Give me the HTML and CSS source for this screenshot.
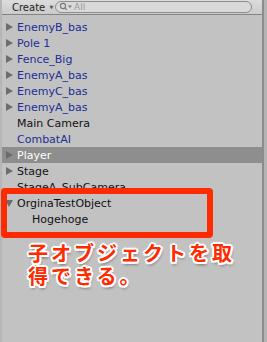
FILE: index.html
```html
<!DOCTYPE html>
<html lang="ja">
<head>
  <meta charset="UTF-8" />
  <meta name="viewport" content="width=device-width, initial-scale=1.0"/>
  <title>Hierarchy</title>
  <link rel="stylesheet" href="styles.css">
</head>
<body>
  <div class="panel">
    <!-- toolbar -->
    <div class="toolbar">
      <span class="create">Create <span class="caret">&#9660;</span></span>
      <div class="search">
        <svg class="search-icon" width="14" height="9" viewBox="0 0 14 9">
          <circle cx="4" cy="4" r="2.6" fill="none" stroke="#7a7a7a" stroke-width="1.1"/>
          <line x1="5.8" y1="5.8" x2="7.8" y2="7.8" stroke="#7a7a7a" stroke-width="1.2"/>
          <path d="M9 3.5 L13 3.5 L11 6 Z" fill="#7a7a7a"/>
        </svg>
        <span class="placeholder">All</span>
      </div>
    </div>

    <!-- hierarchy -->
    <ul class="tree">
      <li class="row prefab"><span class="arrow"></span>EnemyB_bas</li>
      <li class="row prefab"><span class="arrow"></span>Pole 1</li>
      <li class="row prefab"><span class="arrow"></span>Fence_Big</li>
      <li class="row prefab"><span class="arrow"></span>EnemyA_bas</li>
      <li class="row prefab"><span class="arrow"></span>EnemyC_bas</li>
      <li class="row prefab"><span class="arrow"></span>EnemyA_bas</li>
      <li class="row"><span class="no-arrow"></span>Main Camera</li>
      <li class="row prefab"><span class="no-arrow"></span>CombatAI</li>
      <li class="row selected"><span class="arrow"></span>Player</li>
      <li class="row"><span class="arrow"></span>Stage</li>
      <li class="row"><span class="no-arrow"></span>StageA_SubCamera</li>
      <li class="row"><span class="arrow open"></span>OrginaTestObject</li>
      <li class="row child"><span class="no-arrow"></span>Hogehoge</li>
    </ul>

    <!-- annotation -->
    <div class="highlight-box"></div>
    <p class="note">子オブジェクトを取<br>得できる。</p>
  </div>
</body>
</html>
```

FILE: styles.css
```css
* {
  margin: 0;
  padding: 0;
  box-sizing: border-box;
}

body {
  width: 267px;
  height: 342px;
  overflow: hidden;
  background-color: #b4b4b4;
  font-family: 'DejaVu Sans', 'Liberation Sans', sans-serif;
}

.panel {
  position: relative;
  width: 264px;
  height: 342px;
  background-color: #c2c2c2;
  border-left: 2px solid #b6b6b6;
  border-right: 2px solid #8c8c8c;
  display: flex;
  flex-direction: column;
}

/* Toolbar */
.toolbar {
  height: 15px;
  background: linear-gradient(#dcdcdc, #cbcbcb);
  border-bottom: 1px solid #858585;
  display: flex;
  align-items: center;
  padding-left: 10px;
}

.create {
  font-size: 10px;
  color: #222;
  width: 43px;
}

.caret {
  font-size: 5px;
  color: #555;
  vertical-align: 2px;
  margin-left: 1px;
}

.search {
  width: 197px;
  height: 12px;
  margin-top: -1px;
  background-color: #d9d9d9;
  border: 1px solid #8e8e8e;
  border-radius: 6px;
  display: flex;
  align-items: center;
  padding-left: 3px;
}

.search-icon {
  display: block;
}

.placeholder {
  font-size: 9px;
  color: #9a9a9a;
  margin-left: 1px;
}

/* Tree */
.tree {
  list-style: none;
  padding-top: 4px;
}

.row {
  height: 16px;
  display: flex;
  align-items: center;
  font-size: 11px;
  color: #111;
  padding-left: 3px;
  white-space: nowrap;
}

.row.prefab {
  color: #1b2e96;
}

.row.selected {
  background-color: #8e8e8e;
  color: #fff;
}

.row.child {
  padding-left: 18px;
}

.arrow, .no-arrow {
  width: 12px;
  height: 9px;
  flex-shrink: 0;
}

.arrow {
  position: relative;
}

.arrow::before {
  content: "";
  position: absolute;
  left: 1px;
  top: 0;
  border-left: 7px solid #6c6c6c;
  border-top: 4.5px solid transparent;
  border-bottom: 4.5px solid transparent;
}

.arrow.open::before {
  left: 0;
  top: 1px;
  border-top: 7px solid #6c6c6c;
  border-left: 4px solid transparent;
  border-right: 4px solid transparent;
  border-bottom: 0;
}

/* Annotation overlay */
.highlight-box {
  position: absolute;
  left: -1px;
  top: 188px;
  width: 212px;
  height: 50px;
  border: 6px solid #ff2a00;
  border-radius: 4px;
}

.note {
  position: absolute;
  left: 26px;
  top: 241px;
  font-family: 'Noto Sans CJK JP', sans-serif;
  font-weight: bold;
  font-size: 20px;
  line-height: 23px;
  letter-spacing: 3px;
  color: #ff2a00;
  text-shadow:
    -1.5px -1.5px 0 #fff, 1.5px -1.5px 0 #fff,
    -1.5px 1.5px 0 #fff, 1.5px 1.5px 0 #fff,
    0 -2px 0 #fff, 0 2px 0 #fff, -2px 0 0 #fff, 2px 0 0 #fff,
    1px 3px 3px rgba(0, 0, 0, 0.45);
}
```
